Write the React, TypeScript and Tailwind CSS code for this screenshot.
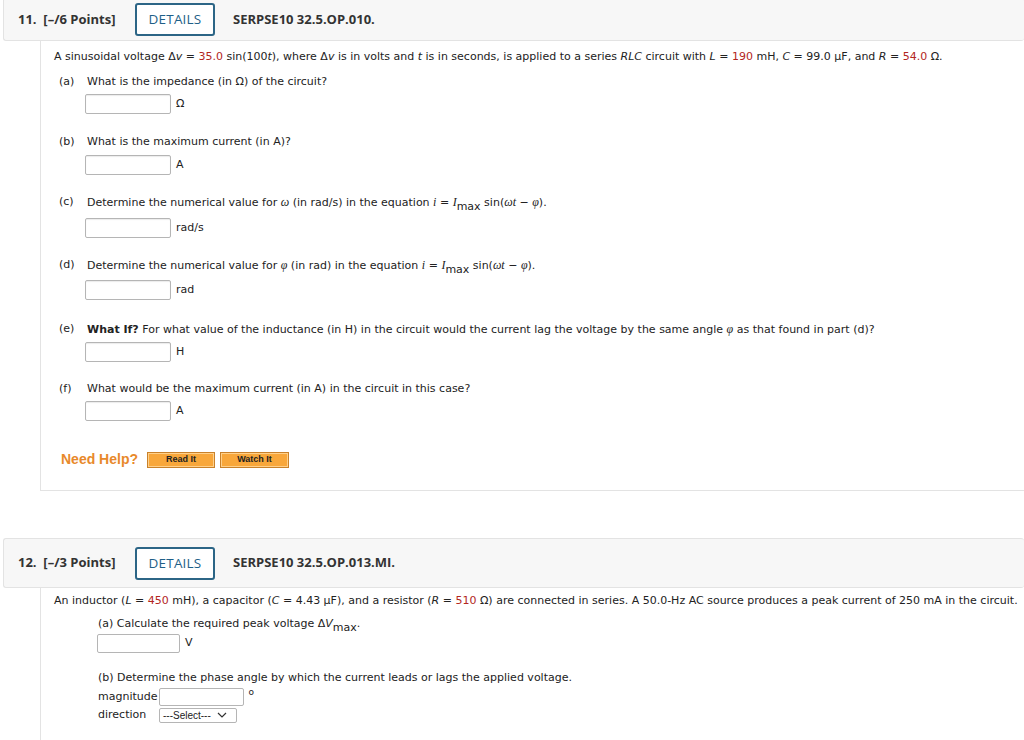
import React from "react";

const V = "font-['DejaVu_Sans','Verdana',sans-serif]";
const RED = "text-[#b3261e]";

function Header({ num, pts, code, cls }: { num: string; pts: string; code: string; cls: string }) {
  return (
    <div className={`flex items-center bg-[#f7f7f7] border border-[#e3e3e3] rounded-[3px] font-['Open_Sans',sans-serif] ${cls}`}>
      <div className="w-[131px] pl-[14px] text-[13px] font-bold text-[#333]">
        {num}&nbsp; [–/{pts} Points]
      </div>
      <div className="w-[80px] h-[33px] flex items-center justify-center border-2 border-[#2c6586] rounded-[3px] bg-white text-[13.5px] text-[#1f5f88] tracking-[0.2px]">
        DETAILS
      </div>
      <div className="ml-[18px] text-[13px] font-bold text-[#333]">{code}</div>
    </div>
  );
}

function Box({ unit }: { unit: React.ReactNode }) {
  return (
    <div className="flex items-center">
      <div className="w-[86px] h-[20px] border border-[#b5b5b5] rounded-[2px] bg-white shadow-[inset_0_1px_1px_rgba(0,0,0,0.08)]" />
      <span className="ml-[5px]">{unit}</span>
    </div>
  );
}

const I = ({ children }: { children: React.ReactNode }) => <i>{children}</i>;
const Sym = ({ children }: { children: React.ReactNode }) => (
  <i className="font-['Liberation_Serif',serif] text-[12px]">{children}</i>
);
const Imax = () => (
  <span>
    <Sym>I</Sym>
    <sub className="text-[11px] relative top-[4px]">max</sub>
  </span>
);

function Part({ l, children }: { l: string; children: React.ReactNode }) {
  return (
    <div className="flex">
      <span className="w-[33px] pl-[5px]">({l})</span>
      <span>{children}</span>
    </div>
  );
}

export default function App() {
  return (
    <div className={`w-[1024px] h-[740px] overflow-hidden bg-white text-[11px] text-[#222] ${V}`}>
      <Header num="11." pts="6" code="SERPSE10 32.5.OP.010." cls="ml-[3px] mt-[-2px] h-[43px] border-r-0" />
      <div className="ml-[40px] border-l border-b border-[#e3e3e3] h-[450px] pl-[13px] pt-[8px]">
        <div className="h-[16px] leading-[16px]">
          A sinusoidal voltage Δ<I>v</I> = <span className={RED}>35.0</span> sin(100<I>t</I>), where Δ<I>v</I> is in volts and <I>t</I> is in seconds, is applied to a series <I>RLC</I> circuit with <I>L</I> = <span className={RED}>190</span> mH, <I>C</I> = 99.0 μF, and <I>R</I> = <span className={RED}>54.0</span> Ω.
        </div>
        <div className="mt-[10px] leading-[14px]">
          <Part l="a">What is the impedance (in Ω) of the circuit?</Part>
        </div>
        <div className="mt-[5px] ml-[31px]"><Box unit="Ω" /></div>
        <div className="mt-[21px] leading-[14px]">
          <Part l="b">What is the maximum current (in A)?</Part>
        </div>
        <div className="mt-[6px] ml-[31px]"><Box unit="A" /></div>
        <div className="mt-[20px] leading-[14px] h-[18px]">
          <Part l="c">
            Determine the numerical value for <Sym>ω</Sym> (in rad/s) in the equation <Sym>i</Sym> = <Imax /> sin(<Sym>ωt</Sym> − <Sym>φ</Sym>).
          </Part>
        </div>
        <div className="mt-[5px] ml-[31px]"><Box unit="rad/s" /></div>
        <div className="mt-[20px] leading-[14px] h-[18px]">
          <Part l="d">
            Determine the numerical value for <Sym>φ</Sym> (in rad) in the equation <Sym>i</Sym> = <Imax /> sin(<Sym>ωt</Sym> − <Sym>φ</Sym>).
          </Part>
        </div>
        <div className="mt-[4px] ml-[31px]"><Box unit="rad" /></div>
        <div className="mt-[22px] leading-[14px]">
          <Part l="e">
            <b>What If?</b> For what value of the inductance (in H) in the circuit would the current lag the voltage by the same angle <Sym>φ</Sym> as that found in part (d)?
          </Part>
        </div>
        <div className="mt-[5px] ml-[31px]"><Box unit="H" /></div>
        <div className="mt-[20px] leading-[14px]">
          <Part l="f">What would be the maximum current (in A) in the circuit in this case?</Part>
        </div>
        <div className="mt-[5px] ml-[31px]"><Box unit="A" /></div>
        <div className="mt-[28px] ml-[7px] flex items-center font-['Liberation_Sans',Arial,sans-serif]">
          <span className="text-[14px] font-bold text-[#e8892b]">Need Help?</span>
          <div className="ml-[9px] w-[68px] h-[16px] flex items-center justify-center bg-[#f8a73b] border border-[#c9812a] text-[9px] font-bold text-[#222] shadow-[inset_0_0_0_1px_#ffd08a]">
            Read It
          </div>
          <div className="ml-[5px] w-[69px] h-[16px] flex items-center justify-center bg-[#f8a73b] border border-[#c9812a] text-[9px] font-bold text-[#222] shadow-[inset_0_0_0_1px_#ffd08a]">
            Watch It
          </div>
        </div>
      </div>

      <Header num="12." pts="3" code="SERPSE10 32.5.OP.013.MI." cls="ml-[3px] mt-[47px] h-[50px] border-r-0" />
      <div className="ml-[40px] border-l border-[#e3e3e3] h-[160px] pl-[13px] pt-[5px]">
        <div className="leading-[16px]">
          An inductor (<I>L</I> = <span className={RED}>450</span> mH), a capacitor (<I>C</I> = 4.43 μF), and a resistor (<I>R</I> = <span className={RED}>510</span> Ω) are connected in series. A 50.0-Hz AC source produces a peak current of 250 mA in the circuit.
        </div>
        <div className="ml-[44px] mt-[7px] leading-[16px] h-[18px]">
          (a) Calculate the required peak voltage Δ<I>V</I>
          <sub className="text-[11px] relative top-[4px]">max</sub>.
        </div>
        <div className="ml-[43px] mt-[0px] flex items-center">
          <div className="w-[83px] h-[19px] border border-[#b5b5b5] rounded-[2px] bg-white" />
          <span className="ml-[5px]">V</span>
        </div>
        <div className="ml-[44px] mt-[17px] leading-[16px]">
          (b) Determine the phase angle by which the current leads or lags the applied voltage.
        </div>
        <div className="ml-[44px] mt-[2px] flex items-center h-[18px]">
          <span>magnitude</span>
          <div className="ml-[1px] w-[85px] h-[18px] border border-[#b5b5b5] rounded-[2px] bg-white" />
          <span className="ml-[5px] text-[9px] relative top-[-4px]">o</span>
        </div>
        <div className="ml-[44px] mt-[1px] flex items-center h-[16px]">
          <span className="w-[61px]">direction</span>
          <div className="w-[78px] h-[15px] border border-[#b5b5b5] rounded-[2px] bg-white flex items-center pl-[3px] font-['Liberation_Sans',Arial,sans-serif] text-[10px] text-[#222]">
            <span>---Select---</span>
            <svg className="ml-[6px]" width="10" height="6" viewBox="0 0 10 6">
              <path d="M1 1 L5 5 L9 1" fill="none" stroke="#333" strokeWidth="1.2" />
            </svg>
          </div>
        </div>
      </div>
    </div>
  );
}
